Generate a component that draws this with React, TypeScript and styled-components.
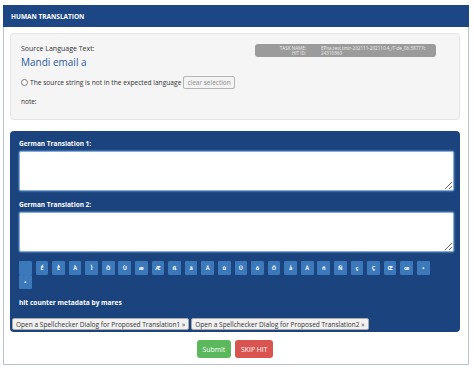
import { createGlobalStyle } from "styled-components"
import styled from "styled-components"

const GlobalStyle = createGlobalStyle`
  html, body {
    margin: 0;
    padding: 0;
    background: #ffffff;
    font-family: "Open Sans", "Liberation Sans", sans-serif;
  }
`

const Page = styled.div`
  padding: 5px 0 0 3px;
`

const Panel = styled.div`
  width: 466px;
  box-sizing: border-box;
  border: 1px solid #b9c3d3;
  border-top: none;
  background: #fff;
`

const Header = styled.div`
  height: 22px;
  margin: 0 -1px;
  background: #1c4684;
  color: #fff;
  font-size: 6.5px;
  font-weight: 700;
  display: flex;
  align-items: center;
  padding: 0 8px;
`

const Body = styled.div`
  padding: 6px 8px 6px 6px;
`

const Well = styled.div`
  background: #f5f5f5;
  border: 1px solid #e4e4e4;
  border-radius: 4px;
  padding: 10px 10px 13px 10px;
`

const WellTop = styled.div`
  display: flex;
  justify-content: space-between;
  align-items: flex-start;
`

const SmallLabel = styled.div`
  font-size: 7px;
  line-height: 9px;
  color: #333;
`

const SourceText = styled.div`
  margin-top: 3px;
  font-size: 10px;
  line-height: 13px;
  color: #2c5b9b;
`

const TaskBox = styled.div`
  margin: 0 13px 0 0;
  width: 181px;
  height: 13px;
  background: #9b9b9b;
  border-radius: 3px;
  display: grid;
  grid-template-columns: 51px 1fr;
  column-gap: 15px;
  align-content: center;
  font-size: 4.6px;
  line-height: 5px;
  color: #eeeeee;
  overflow: hidden;
`

const TaskKey = styled.span`
  text-align: right;
`

const TaskValue = styled.span`
  white-space: nowrap;
  overflow: hidden;
`

const RadioRow = styled.div`
  margin-top: 7px;
  display: flex;
  align-items: center;
  font-size: 6.65px;
  color: #333;
`

const Radio = styled.input`
  width: 7px;
  height: 7px;
  margin: 0 2px 0 0;
`

const ClearButton = styled.button`
  margin-left: 2px;
  height: 13px;
  padding: 0 3px;
  font-family: inherit;
  font-size: 6.5px;
  color: #8a8a8a;
  background: #f3f3f3;
  border: 1px solid #b5b5b5;
  border-radius: 2px;
`

const Note = styled(SmallLabel)`
  margin-top: 8px;
  font-size: 6.5px;
`

const TranslationBox = styled.div`
  margin-top: 11px;
  background: #1b447f;
  border-radius: 4px;
  padding: 0 2px 2px 2px;
`

const Inner = styled.div`
  padding: 8px 4px 0 7px;
`

const FieldLabel = styled.div`
  font-size: 6.5px;
  line-height: 9px;
  font-weight: 700;
  color: #fff;
  margin-bottom: 3px;
`

const Area = styled.textarea`
  display: block;
  width: 100%;
  height: 40px;
  box-sizing: border-box;
  border: 1px solid #7eaee0;
  border-radius: 2px;
  background: #fff;
  margin-bottom: 9px;
  resize: vertical;
  outline: none;
  font-family: inherit;
  font-size: 9px;
  padding: 4px 6px;
  caret-color: #333;
  box-shadow: 0 0 2px #9cc4ec;
`

const CharRow = styled.div`
  display: flex;
  flex-wrap: wrap;
  column-gap: 3.9px;
  row-gap: 0;
  max-width: 420px;
`

const CharButton = styled.button`
  flex: 0 0 12.7px;
  width: 12.7px;
  height: 14px;
  padding: 0;
  background: #3b79bb;
  color: #fff;
  border: none;
  border-radius: 1px;
  font-family: inherit;
  font-size: 5.5px;
  font-weight: 700;
  display: flex;
  align-items: center;
  justify-content: center;
`

const MetaLine = styled.div`
  margin-top: 9px;
  font-size: 6.6px;
  line-height: 9px;
  font-weight: 700;
  color: #fff;
`

const SpellRow = styled.div`
  margin-top: 11px;
  display: flex;
  gap: 2px;
`

const SpellButton = styled.button`
  height: 12px;
  padding: 0 3px;
  font-family: inherit;
  font-size: 6.55px;
  color: #333;
  background: #f1f1f1;
  border: 1px solid #a9a9a9;
  border-radius: 2px;
  white-space: nowrap;
`

const Actions = styled.div`
  margin-top: 8px;
  display: flex;
  justify-content: center;
  gap: 4px;
`

const ActionButton = styled.button<{ $tone: "ok" | "skip" }>`
  height: 18px;
  padding: 0 6px;
  border: none;
  border-radius: 3px;
  font-family: inherit;
  font-size: 6.8px;
  color: #fff;
  background: ${(p) => (p.$tone === "ok" ? "#5cb85c" : "#d9534f")};
`

const chars = [
  " ", "É", "È", "À", "Ì", "Ò", "Ù", "æ", "Æ", "ß", "ä", "Ä", "ü", "Ü",
  "ö", "Ö", "å", "Å", "ñ", "Ñ", "ç", "Ç", "Œ", "œ", "•", "•",
]

export default function App() {
  return (
    <>
      <GlobalStyle />
      <Page>
        <Panel>
          <Header>HUMAN TRANSLATION</Header>
          <Body>
            <Well>
              <WellTop>
                <div>
                  <SmallLabel>Source Language Text:</SmallLabel>
                  <SourceText>Mandi email a</SourceText>
                </div>
                <TaskBox>
                  <TaskKey>TASK NAME:</TaskKey>
                  <TaskValue>EPita.test.tmir-202111-202110.4_iT-de_06.58777c</TaskValue>
                  <TaskKey>HIT ID:</TaskKey>
                  <TaskValue>24310360</TaskValue>
                </TaskBox>
              </WellTop>
              <RadioRow>
                <Radio type="radio" name="lang" />
                The source string is not in the expected language
                <ClearButton>clear selection</ClearButton>
              </RadioRow>
              <Note>note:</Note>
            </Well>

            <TranslationBox>
              <Inner>
                <FieldLabel>German Translation 1:</FieldLabel>
                <Area autoFocus />
                <FieldLabel>German Translation 2:</FieldLabel>
                <Area />
                <CharRow>
                  {chars.map((c, i) => (
                    <CharButton key={i}>{c}</CharButton>
                  ))}
                </CharRow>
                <MetaLine>hit counter metadata by mares</MetaLine>
              </Inner>
              <SpellRow>
                <SpellButton>Open a Spellchecker Dialog for Proposed Translation1 »</SpellButton>
                <SpellButton>Open a Spellchecker Dialog for Proposed Translation2 »</SpellButton>
              </SpellRow>
            </TranslationBox>

            <Actions>
              <ActionButton $tone="ok">Submit</ActionButton>
              <ActionButton $tone="skip">SKIP HIT</ActionButton>
            </Actions>
          </Body>
        </Panel>
      </Page>
    </>
  )
}
